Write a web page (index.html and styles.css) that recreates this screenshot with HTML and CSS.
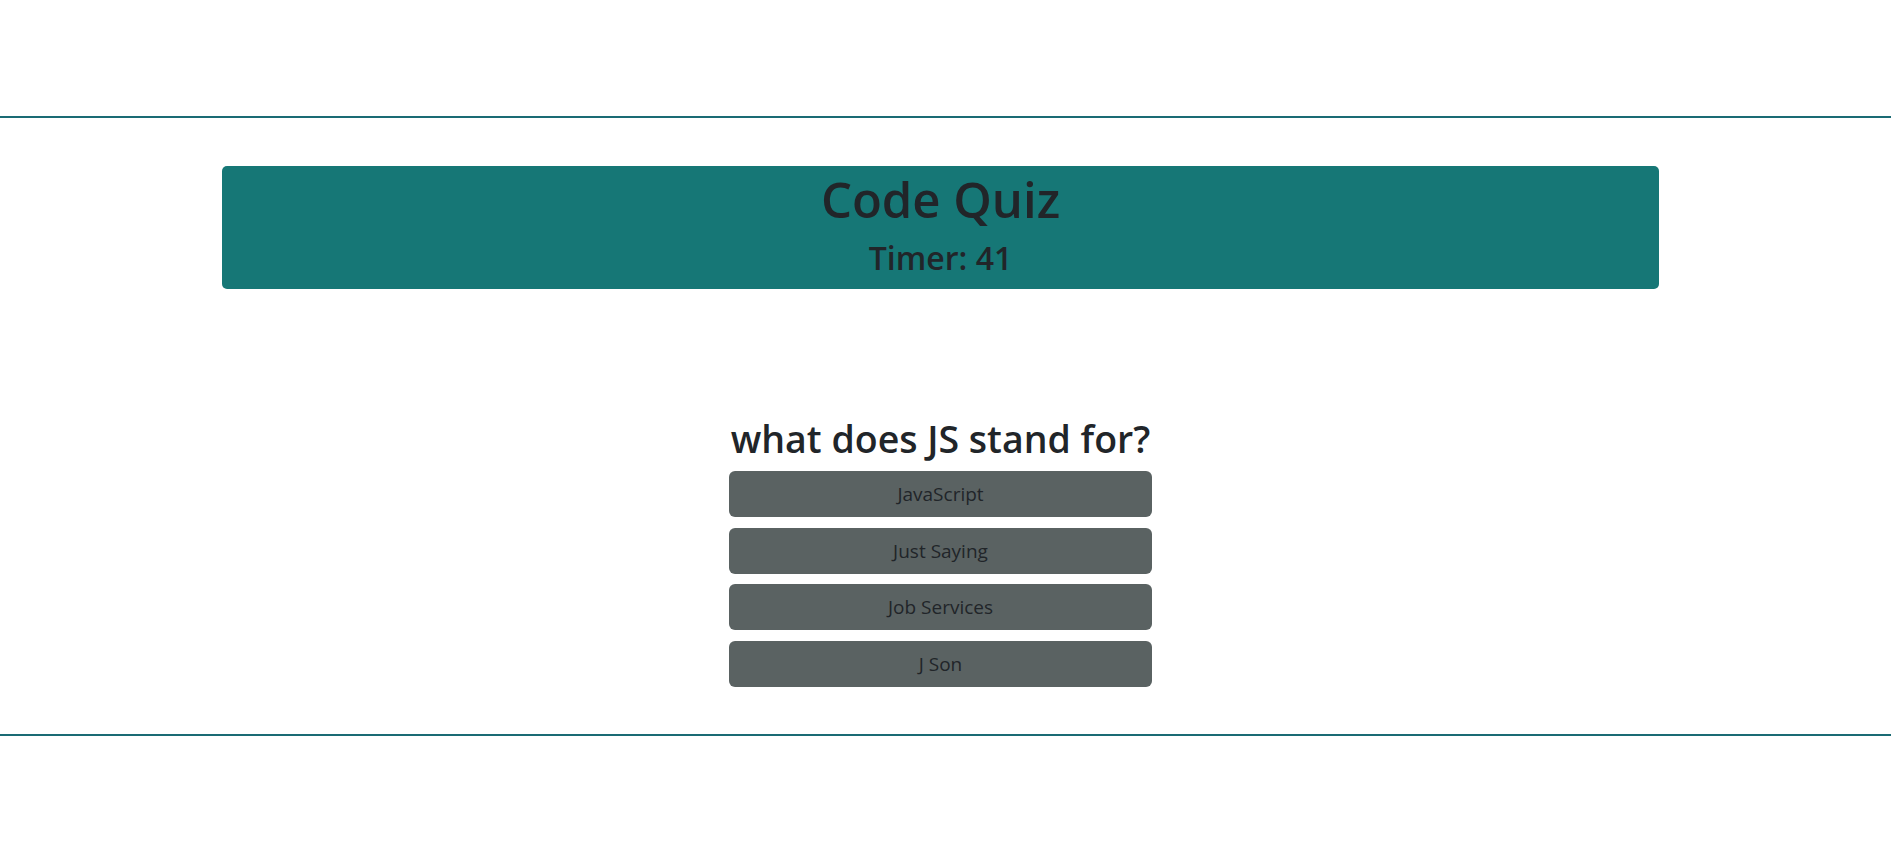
FILE: index.html
```html
<!DOCTYPE html>
<html lang="en">
<head>
<meta charset="utf-8">
<title>Code Quiz</title>
<link rel="stylesheet" href="styles.css">
</head>
<body>
<div class="top-space"></div>
<main class="page">
  <header class="banner">
    <h1 class="title">Code Quiz</h1>
    <h2 class="timer">Timer: 41</h2>
  </header>
  <section class="quiz">
    <h2 class="question">what does JS stand for?</h2>
    <div class="answers">
      <button class="answer">JavaScript</button>
      <button class="answer">Just Saying</button>
      <button class="answer">Job Services</button>
      <button class="answer">J Son</button>
    </div>
  </section>
</main>
</body>
</html>
```
FILE: styles.css
```css
html, body {
  margin: 0;
  padding: 0;
  background: #ffffff;
}
body {
  font-family: "Open Sans", "Noto Sans", sans-serif;
  color: #212529;
}
.top-space {
  height: 116px;
}
.page {
  border-top: 2px solid #1a6b74;
  border-bottom: 2px solid #1a6b74;
  padding-top: 48px;
  height: 568px;
  box-sizing: content-box;
}
.banner {
  width: 1437px;
  margin-left: 222px;
  height: 123px;
  box-sizing: border-box;
  padding-top: 4px;
  background: #167776;
  border-radius: 5px;
  display: flex;
  flex-direction: column;
  align-items: center;
}
.title {
  margin: 0;
  font-size: 49px;
  line-height: 58px;
  font-weight: 600;
}
.timer {
  margin: 10px 0 0;
  font-size: 32px;
  line-height: 40px;
  font-weight: 600;
}
.quiz {
  width: 423px;
  margin-left: 729px;
  margin-top: 127px;
  display: flex;
  flex-direction: column;
  align-items: center;
}
.question {
  margin: 0 0 9px;
  font-size: 37.5px;
  line-height: 46px;
  font-weight: 600;
  white-space: nowrap;
}
.answers {
  width: 100%;
  display: flex;
  flex-direction: column;
  gap: 10.6px;
}
.answer {
  height: 46px;
  width: 100%;
  border: none;
  border-radius: 6px;
  background: #5a6262;
  color: #212529;
  font-family: "Open Sans", "Noto Sans", sans-serif;
  font-size: 19px;
  padding: 0;
}
```
